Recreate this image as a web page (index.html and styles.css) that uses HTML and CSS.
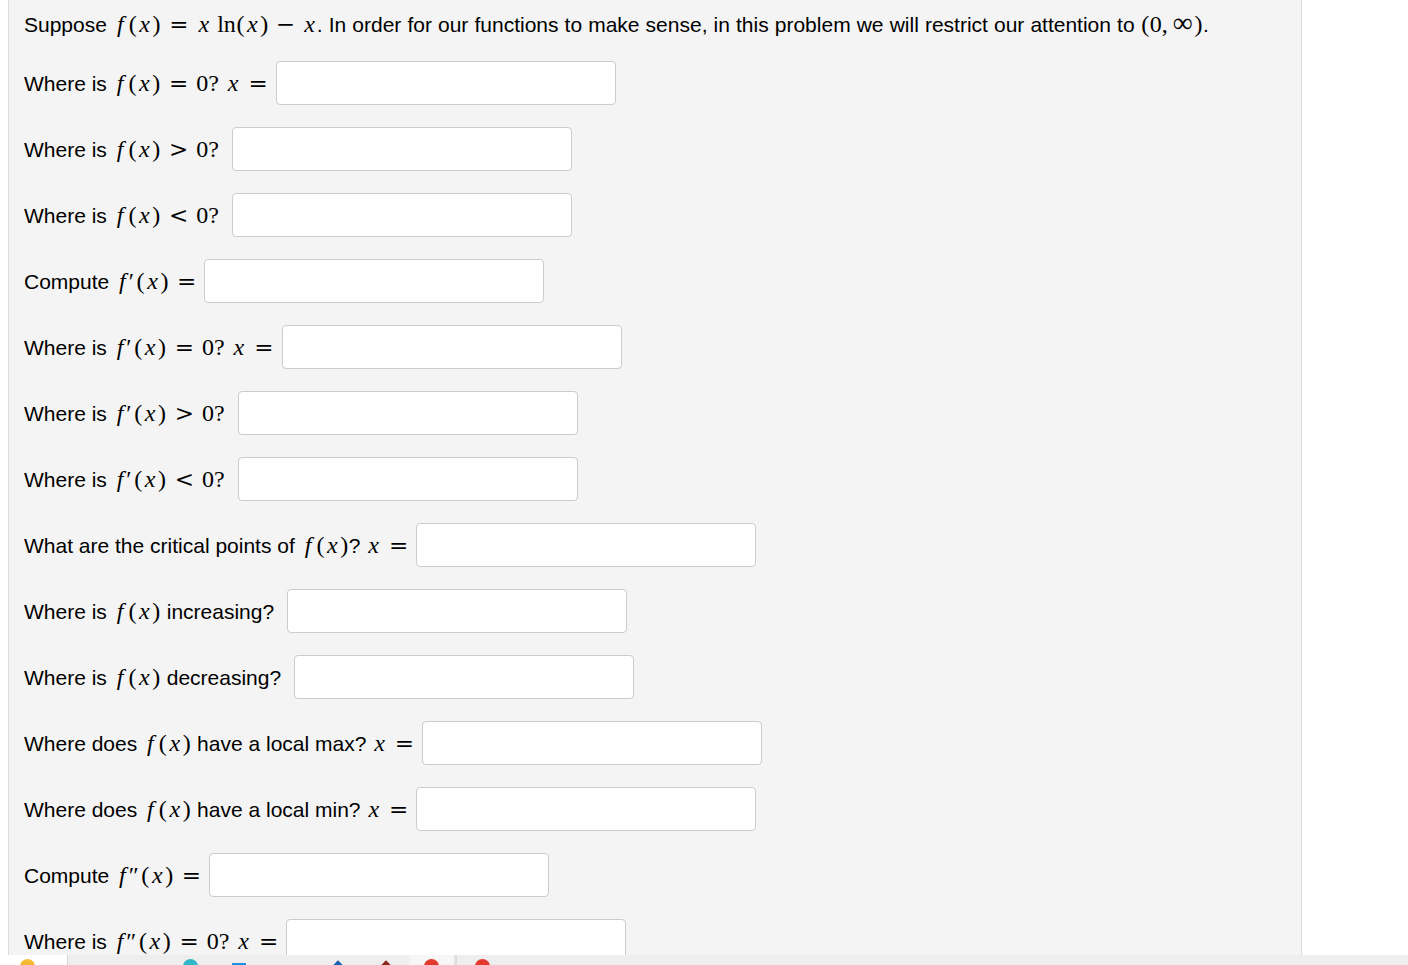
FILE: index.html
```html
<!DOCTYPE html>
<html>
<head>
<meta charset="utf-8">
<link rel="stylesheet" href="styles.css">
</head>
<body>
<div class="page">
  <div class="panel">
    <p class="intro">Suppose <span class="m"><i class="f">f</i><span class="p">(</span><i class="v">x</i><span class="p">)</span><span class="mo">=</span><i class="v">x</i><span class="fn">ln</span><span class="p">(</span><i class="v">x</i><span class="p">)</span><span class="mo bin">−</span><i class="v">x</i></span>. In order for our functions to make sense, in this problem we will restrict our attention to <span class="m"><span class="p">(</span>0,<span class="inf">∞</span><span class="p">)</span></span>.</p>

    <div class="row"><span class="lbl">Where is <span class="m"><i class="f">f</i><span class="p">(</span><i class="v">x</i><span class="p">)</span><span class="mo">=</span>0?<span class="sp"></span><i class="v">x</i><span class="mo end">=</span></span></span><span class="box"></span></div>
    <div class="row"><span class="lbl txt">Where is <span class="m"><i class="f">f</i><span class="p">(</span><i class="v">x</i><span class="p">)</span><span class="mo">&gt;</span>0?</span></span><span class="box"></span></div>
    <div class="row"><span class="lbl txt">Where is <span class="m"><i class="f">f</i><span class="p">(</span><i class="v">x</i><span class="p">)</span><span class="mo">&lt;</span>0?</span></span><span class="box"></span></div>
    <div class="row"><span class="lbl">Compute <span class="m"><i class="f">f</i><span class="pr">′</span><span class="p">(</span><i class="v">x</i><span class="p">)</span><span class="mo end">=</span></span></span><span class="box"></span></div>
    <div class="row"><span class="lbl">Where is <span class="m"><i class="f">f</i><span class="pr">′</span><span class="p">(</span><i class="v">x</i><span class="p">)</span><span class="mo">=</span>0?<span class="sp"></span><i class="v">x</i><span class="mo end">=</span></span></span><span class="box"></span></div>
    <div class="row"><span class="lbl txt">Where is <span class="m"><i class="f">f</i><span class="pr">′</span><span class="p">(</span><i class="v">x</i><span class="p">)</span><span class="mo">&gt;</span>0?</span></span><span class="box"></span></div>
    <div class="row"><span class="lbl txt">Where is <span class="m"><i class="f">f</i><span class="pr">′</span><span class="p">(</span><i class="v">x</i><span class="p">)</span><span class="mo">&lt;</span>0?</span></span><span class="box"></span></div>
    <div class="row"><span class="lbl">What are the critical points of <span class="m"><i class="f">f</i><span class="p">(</span><i class="v">x</i><span class="p">)</span></span>? <span class="m"><i class="v">x</i><span class="mo end">=</span></span></span><span class="box"></span></div>
    <div class="row"><span class="lbl txt">Where is <span class="m"><i class="f">f</i><span class="p">(</span><i class="v">x</i><span class="p">)</span></span> increasing?</span><span class="box"></span></div>
    <div class="row"><span class="lbl txt">Where is <span class="m"><i class="f">f</i><span class="p">(</span><i class="v">x</i><span class="p">)</span></span> decreasing?</span><span class="box"></span></div>
    <div class="row"><span class="lbl">Where does <span class="m"><i class="f">f</i><span class="p">(</span><i class="v">x</i><span class="p">)</span></span> have a local max? <span class="m"><i class="v">x</i><span class="mo end">=</span></span></span><span class="box"></span></div>
    <div class="row"><span class="lbl">Where does <span class="m"><i class="f">f</i><span class="p">(</span><i class="v">x</i><span class="p">)</span></span> have a local min? <span class="m"><i class="v">x</i><span class="mo end">=</span></span></span><span class="box"></span></div>
    <div class="row"><span class="lbl">Compute <span class="m"><i class="f">f</i><span class="pr">″</span><span class="p">(</span><i class="v">x</i><span class="p">)</span><span class="mo end">=</span></span></span><span class="box"></span></div>
    <div class="row"><span class="lbl">Where is <span class="m"><i class="f">f</i><span class="pr">″</span><span class="p">(</span><i class="v">x</i><span class="p">)</span><span class="mo">=</span>0?<span class="sp"></span><i class="v">x</i><span class="mo end">=</span></span></span><span class="box"></span></div>
  </div>
  <div class="taskbar">
    <div class="tab first"><span class="dot orange"></span></div>
    <div class="tb-items">
      <span class="dot teal"></span>
      <span class="sq blue"></span>
      <span class="tiny blue2"></span>
      <span class="tiny dred"></span>
      <div class="tile"><span class="dot red"></span></div>
      <span class="sep"></span>
      <span class="dot red"></span>
    </div>
  </div>
</div>
</body>
</html>
```
FILE: styles.css
```css
html, body {
  margin: 0;
  padding: 0;
  background: #ffffff;
}
.page {
  width: 1408px;
  height: 965px;
  overflow: hidden;
  display: flex;
  flex-direction: column;
}
.panel {
  margin-left: 8px;
  width: 1294px;
  box-sizing: border-box;
  height: 955px;
  flex: none;
  overflow: hidden;
  background: #f4f4f4;
  border-left: 1px solid #dcdcdc;
  border-right: 1px solid #dcdcdc;
  padding: 0 15px;
  font-family: "Liberation Sans", Arial, sans-serif;
  font-size: 21px;
  color: #000;
}
.intro {
  margin: 0 0 15px 0;
  padding-top: 2px;
  height: 44px;
  line-height: 44px;
  white-space: nowrap;
  word-spacing: 0.25px;
}
.m {
  font-family: "Liberation Serif", "Times New Roman", serif;
  font-size: 24px;
  white-space: nowrap;
  color: #000;
  word-spacing: 0;
}
.m i { font-style: italic; }
.f { padding: 0 4.5px 0 4px; }
.v { padding: 0 2px; }
.p { padding: 0 0.6px; }
.pr { padding: 0 2px 0 0; margin-left: -1.5px; }
.fn { padding: 0 0 0 6px; }
.inf { padding: 0 1px 0 5px; font-size: 28px; line-height: 0; }
.sp { display: inline-block; width: 7px; }
.mo {
  font-family: "DejaVu Serif", serif;
  font-size: 23px;
  padding: 0 8px;
}
.mo.bin { padding: 0 7px; }
.mo.end { padding-right: 0; }
.row {
  display: flex;
  align-items: center;
  height: 44px;
  margin-bottom: 22px;
  white-space: nowrap;
}
.lbl.txt { padding-right: 5px; }
.box {
  display: block;
  width: 340px;
  height: 44px;
  box-sizing: border-box;
  margin-left: 8px;
  background: #fff;
  border: 1px solid #cccccc;
  border-radius: 4px;
  flex: none;
}
.taskbar {
  flex: none;
  height: 10px;
  background: #eeeeee;
  display: flex;
  overflow: hidden;
}
.tab.first {
  width: 67px;
  background: #fff;
  border-right: 1px solid #d6d6d6;
  flex: none;
}
.dot {
  display: block;
  width: 15px;
  height: 15px;
  border-radius: 50%;
  margin-top: 4px;
  flex: none;
}
.tab.first .dot { margin-left: 20px; }
.orange { background: linear-gradient(#f7c23a, #f29a1e); }
.teal { background: #2fb7c8; margin-left: 115px; }
.sq { display: block; width: 14px; height: 14px; margin-top: 8px; margin-left: 34px; flex: none; }
.blue { background: #1e90e0; }
.tiny { display: block; width: 8px; height: 8px; margin-top: 7px; flex: none; transform: rotate(45deg); }
.blue2 { background: #1a5fb4; margin-left: 88px; }
.dred { background: #8a2a1a; margin-left: 40px; }
.tb-items { display: flex; align-items: flex-start; }
.tile {
  width: 44px;
  margin-left: 19px;
  background: #f6f6f6;
  display: flex;
  justify-content: center;
  flex: none;
}
.red { background: #e23a2f; }
.sep { display: block; width: 2px; height: 10px; background: #dadada; margin-left: 2px; margin-right: 18px; flex: none; }
```
